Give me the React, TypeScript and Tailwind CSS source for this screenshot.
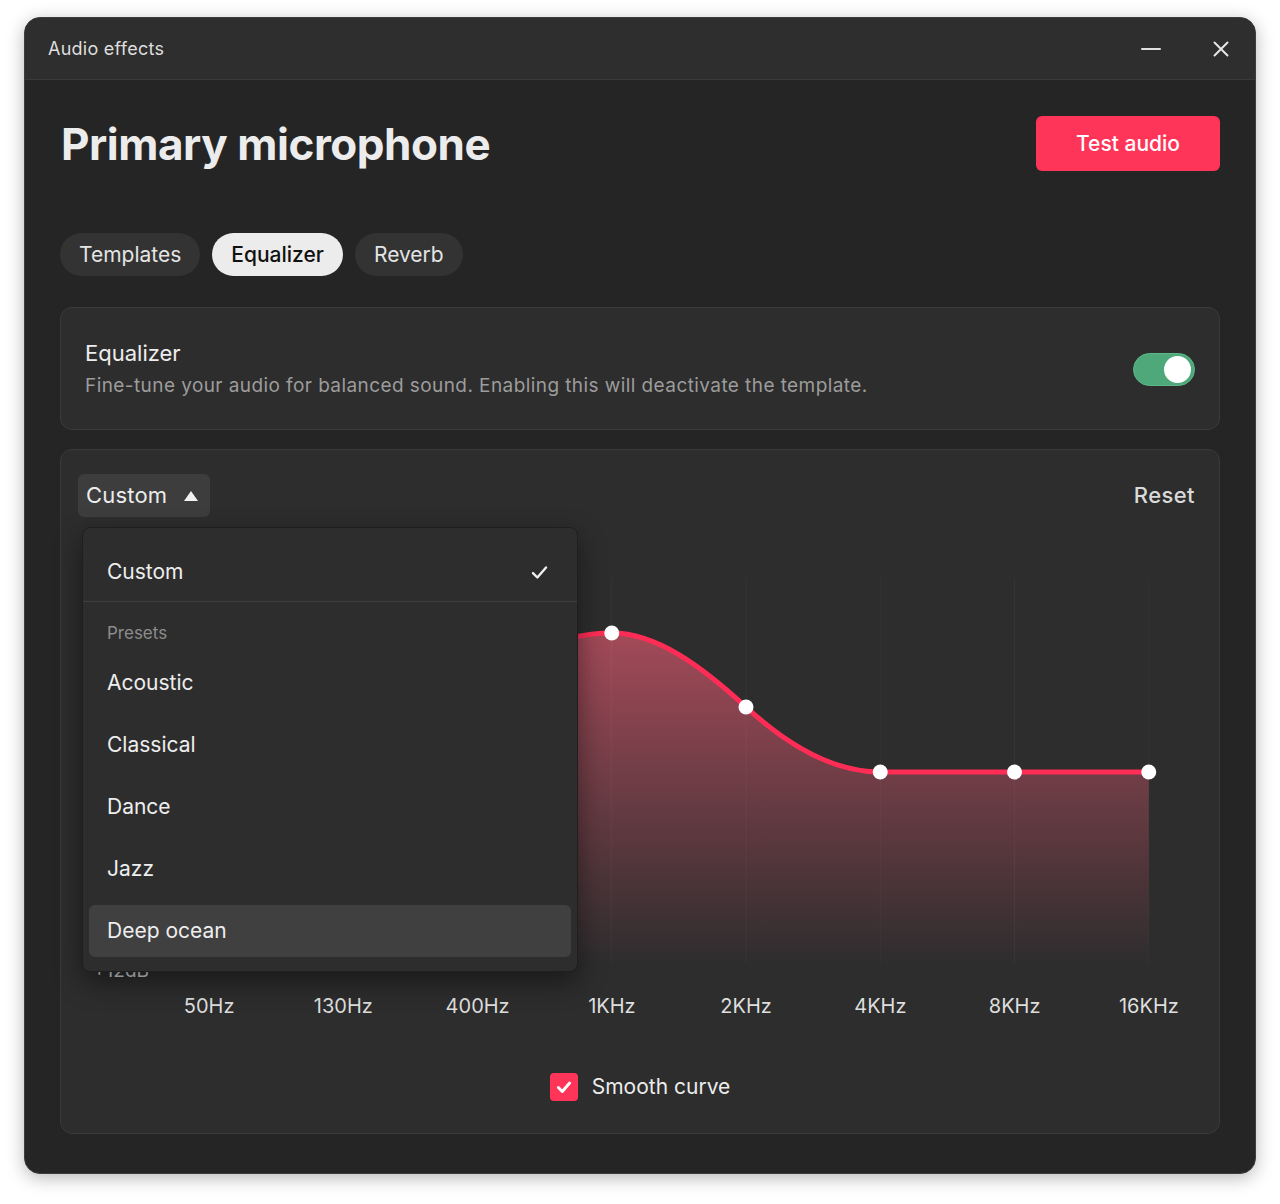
import { useState } from "react"

const FREQS = ["50Hz", "130Hz", "400Hz", "1KHz", "2KHz", "4KHz", "8KHz", "16KHz"]
// y of each band handle, in page pixels, and the curve's slope through it
const LEVELS = [700, 690, 662, 633, 707, 772, 772, 772]
const SLOPES = [0, -0.12, -0.2, 0, 0.92, 0, 0, 0]
const X0 = 209
const STEP = 134.25
const BOTTOM = 963

const PRESETS = ["Acoustic", "Classical", "Dance", "Jazz", "Deep ocean"]

function curvePath(xs: number[], ys: number[], m: number[]) {
  let p = `M ${xs[0]} ${ys[0]}`
  for (let i = 0; i < xs.length - 1; i++) {
    const h = (xs[i + 1] - xs[i]) / 3
    p += ` C ${xs[i] + h} ${ys[i] + m[i] * h} ${xs[i + 1] - h} ${ys[i + 1] - m[i + 1] * h} ${xs[i + 1]} ${ys[i + 1]}`
  }
  return p
}

function Chart() {
  const xs = FREQS.map((_f, i) => X0 + STEP * i)
  const line = curvePath(xs, LEVELS, SLOPES)
  const area = `${line} L ${xs[xs.length - 1]} ${BOTTOM} L ${xs[0]} ${BOTTOM} Z`
  return (
    <svg width="1158" height="468" viewBox="61 517 1158 468" className="block">
      <defs>
        <linearGradient id="eqFill" gradientUnits="userSpaceOnUse" x1="0" y1="620" x2="0" y2={BOTTOM}>
          <stop offset="0" stopColor="#a84b5a" />
          <stop offset="1" stopColor="#2e2d2e" />
        </linearGradient>
      </defs>
      <path d={area} fill="url(#eqFill)" />
      {xs.map((x) => (
        <line key={x} x1={x} x2={x} y1={578} y2={BOTTOM} stroke="rgba(255,255,255,0.035)" strokeWidth="1" />
      ))}
      <path d={line} fill="none" stroke="#ff2d55" strokeWidth="5" strokeLinecap="round" />
      {xs.map((x, i) => (
        <circle key={x} cx={x} cy={LEVELS[i]} r="7.5" fill="#ffffff" />
      ))}
      <text x="93" y="600" fill="#cfcfcf" fontSize="19" fontFamily="Inter, sans-serif">+12dB</text>
      <text x="93" y="780" fill="#cfcfcf" fontSize="19" fontFamily="Inter, sans-serif">0dB</text>
      <text x="93" y="977" fill="#cfcfcf" fontSize="19" fontFamily="Inter, sans-serif">+12dB</text>
    </svg>
  )
}

function Check({ className }: { className?: string }) {
  return (
    <svg viewBox="0 0 16 16" className={className} fill="none">
      <path d="M2.5 8.5 L6.2 12.2 L13.5 3.8" stroke="currentColor" strokeWidth="2" strokeLinecap="round" strokeLinejoin="round" />
    </svg>
  )
}

export default function App() {
  const [tab, setTab] = useState("Equalizer")
  const [on, setOn] = useState(true)
  const [smooth, setSmooth] = useState(true)
  const [preset, setPreset] = useState("Deep ocean")

  return (
    <div className="h-[1204px] w-[1280px] bg-white pl-[24px] pt-[17px] font-['Inter','Noto_Sans',sans-serif]">
      <div className="flex h-[1157px] w-[1232px] flex-col overflow-hidden rounded-[16px] border border-[#3e3e3e] bg-[#252525] shadow-[0_4px_18px_rgba(0,0,0,0.28)]">

        {/* title bar */}
        <div className="flex h-[62px] shrink-0 items-center justify-between border-b border-[#3a3a3a] bg-[#2e2e2e] pl-[23px] pr-[26px]">
          <span className="text-[18px] tracking-[0.25px] text-[#dedede]">Audio effects</span>
          <div className="flex items-center gap-[52px]">
            <span className="block h-[2px] w-[20px] rounded bg-[#e0e0e0]" />
            <svg viewBox="0 0 16 16" className="h-[16px] w-[16px] text-[#e6e6e6]" fill="none">
              <path d="M1.5 1.5 L14.5 14.5 M14.5 1.5 L1.5 14.5" stroke="currentColor" strokeWidth="2" strokeLinecap="round" />
            </svg>
          </div>
        </div>

        <div className="flex flex-1 flex-col px-[35px]">
          {/* header */}
          <div className="mt-[36px] flex items-center justify-between">
            <h1 className="pl-[1px] text-[44px] font-bold leading-none tracking-[-0.45px] text-[#ececec]">Primary microphone</h1>
            <button className="h-[55px] w-[184px] rounded-[6px] bg-[#fe3558] text-[21px] font-medium text-white">
              Test audio
            </button>
          </div>

          {/* tabs */}
          <div className="mt-[62px] flex gap-[12px]">
            {["Templates", "Equalizer", "Reverb"].map((t) => (
              <button
                key={t}
                onClick={() => setTab(t)}
                className={
                  t === tab
                    ? "h-[43px] rounded-full bg-[#ececec] px-[19px] text-[21px] font-medium text-[#111]"
                    : "h-[43px] rounded-full bg-[#333333] px-[19px] text-[21px] text-[#e4e4e4]"
                }
              >
                {t}
              </button>
            ))}
          </div>

          {/* equalizer toggle card */}
          <div className="mt-[31px] flex items-center justify-between rounded-[12px] border border-[#3a3a3a] bg-[#2d2d2d] pb-[30px] pl-[24px] pr-[24px] pt-[31px]">
            <div>
              <div className="text-[22px] leading-[28px] text-[#ededed]">Equalizer</div>
              <div className="mt-[6px] text-[19px] leading-[26px] tracking-[0.42px] text-[#9c9c9c]">
                Fine-tune your audio for balanced sound. Enabling this will deactivate the template.
              </div>
            </div>
            <button
              onClick={() => setOn(!on)}
              className={
                on
                  ? "flex h-[33px] w-[62px] items-center justify-end rounded-full border border-[#5bb98a] bg-[#4fa87a] px-[3px]"
                  : "flex h-[33px] w-[62px] items-center justify-start rounded-full bg-[#555] px-[3px]"
              }
            >
              <span className="block h-[27px] w-[27px] rounded-full bg-white" />
            </button>
          </div>

          {/* chart card */}
          <div className="relative mt-[19px] flex flex-col rounded-[12px] border border-[#3a3a3a] bg-[#2d2d2d]">
            <div className="mt-[24px] flex items-center justify-between pl-[17px] pr-[24px]">
              <button className="flex h-[43px] items-center gap-[17px] rounded-[6px] bg-[#3d3d3d] pl-[8px] pr-[12px] text-[22px] tracking-[0.2px] text-[#ececec]">
                Custom
                <svg viewBox="0 0 14 10" className="h-[10px] w-[14px]">
                  <path d="M7 0 L14 10 L0 10 Z" fill="#f2f2f2" />
                </svg>
              </button>
              <button className="text-[22px] font-medium tracking-[0.4px] text-[#dadada]">Reset</button>
            </div>

            <Chart />

            <div className="ml-[81px] mt-[6px] grid w-[1074px] grid-cols-8 text-[20px] text-[#dedede]">
              {FREQS.map((f) => (
                <span key={f} className="text-center leading-[30px]">{f}</span>
              ))}
            </div>

            <label className="mx-auto mb-[30px] mt-[50px] flex items-center gap-[14px]">
              <button
                onClick={() => setSmooth(!smooth)}
                className={
                  smooth
                    ? "flex h-[28px] w-[28px] items-center justify-center rounded-[4px] bg-[#fe3558] text-white"
                    : "flex h-[28px] w-[28px] items-center justify-center rounded-[4px] border-2 border-[#777]"
                }
              >
                {smooth && (
                  <svg viewBox="0 0 16 16" className="h-[18px] w-[18px]" fill="none">
                    <path d="M3 8.5 L6.5 12 L13 4.5" stroke="currentColor" strokeWidth="2.6" strokeLinecap="round" strokeLinejoin="round" />
                  </svg>
                )}
              </button>
              <span className="text-[21px] text-[#ececec]">Smooth curve</span>
            </label>

            {/* preset menu */}
            <div className="absolute left-[21px] top-[77px] w-[496px] rounded-[8px] border border-[#1f1f1f] bg-[#2d2d2d] shadow-[0_10px_28px_rgba(0,0,0,0.45)]">
              <div className="mt-[15px] flex h-[58px] items-center justify-between pl-[24px] pr-[28px] text-[21px] text-[#eeeeee]">
                Custom
                <Check className="h-[19px] w-[19px] text-[#f0f0f0]" />
              </div>
              <div className="h-px bg-[#3e3e3e]" />
              <div className="pb-[9px] pl-[24px] pt-[21px] text-[17px] leading-[20px] text-[#8c8c8c]">Presets</div>
              <div className="flex flex-col gap-[10px] px-[6px] pb-[14px] pt-[5px]">
                {PRESETS.map((p) => (
                  <div
                    key={p}
                    onClick={() => setPreset(p)}
                    className={
                      p === preset
                        ? "flex h-[52px] items-center rounded-[6px] bg-[#404040] pl-[18px] text-[21px] text-[#eeeeee]"
                        : "flex h-[52px] items-center rounded-[6px] pl-[18px] text-[21px] text-[#eeeeee]"
                    }
                  >
                    {p}
                  </div>
                ))}
              </div>
            </div>
          </div>
        </div>
      </div>
    </div>
  )
}
